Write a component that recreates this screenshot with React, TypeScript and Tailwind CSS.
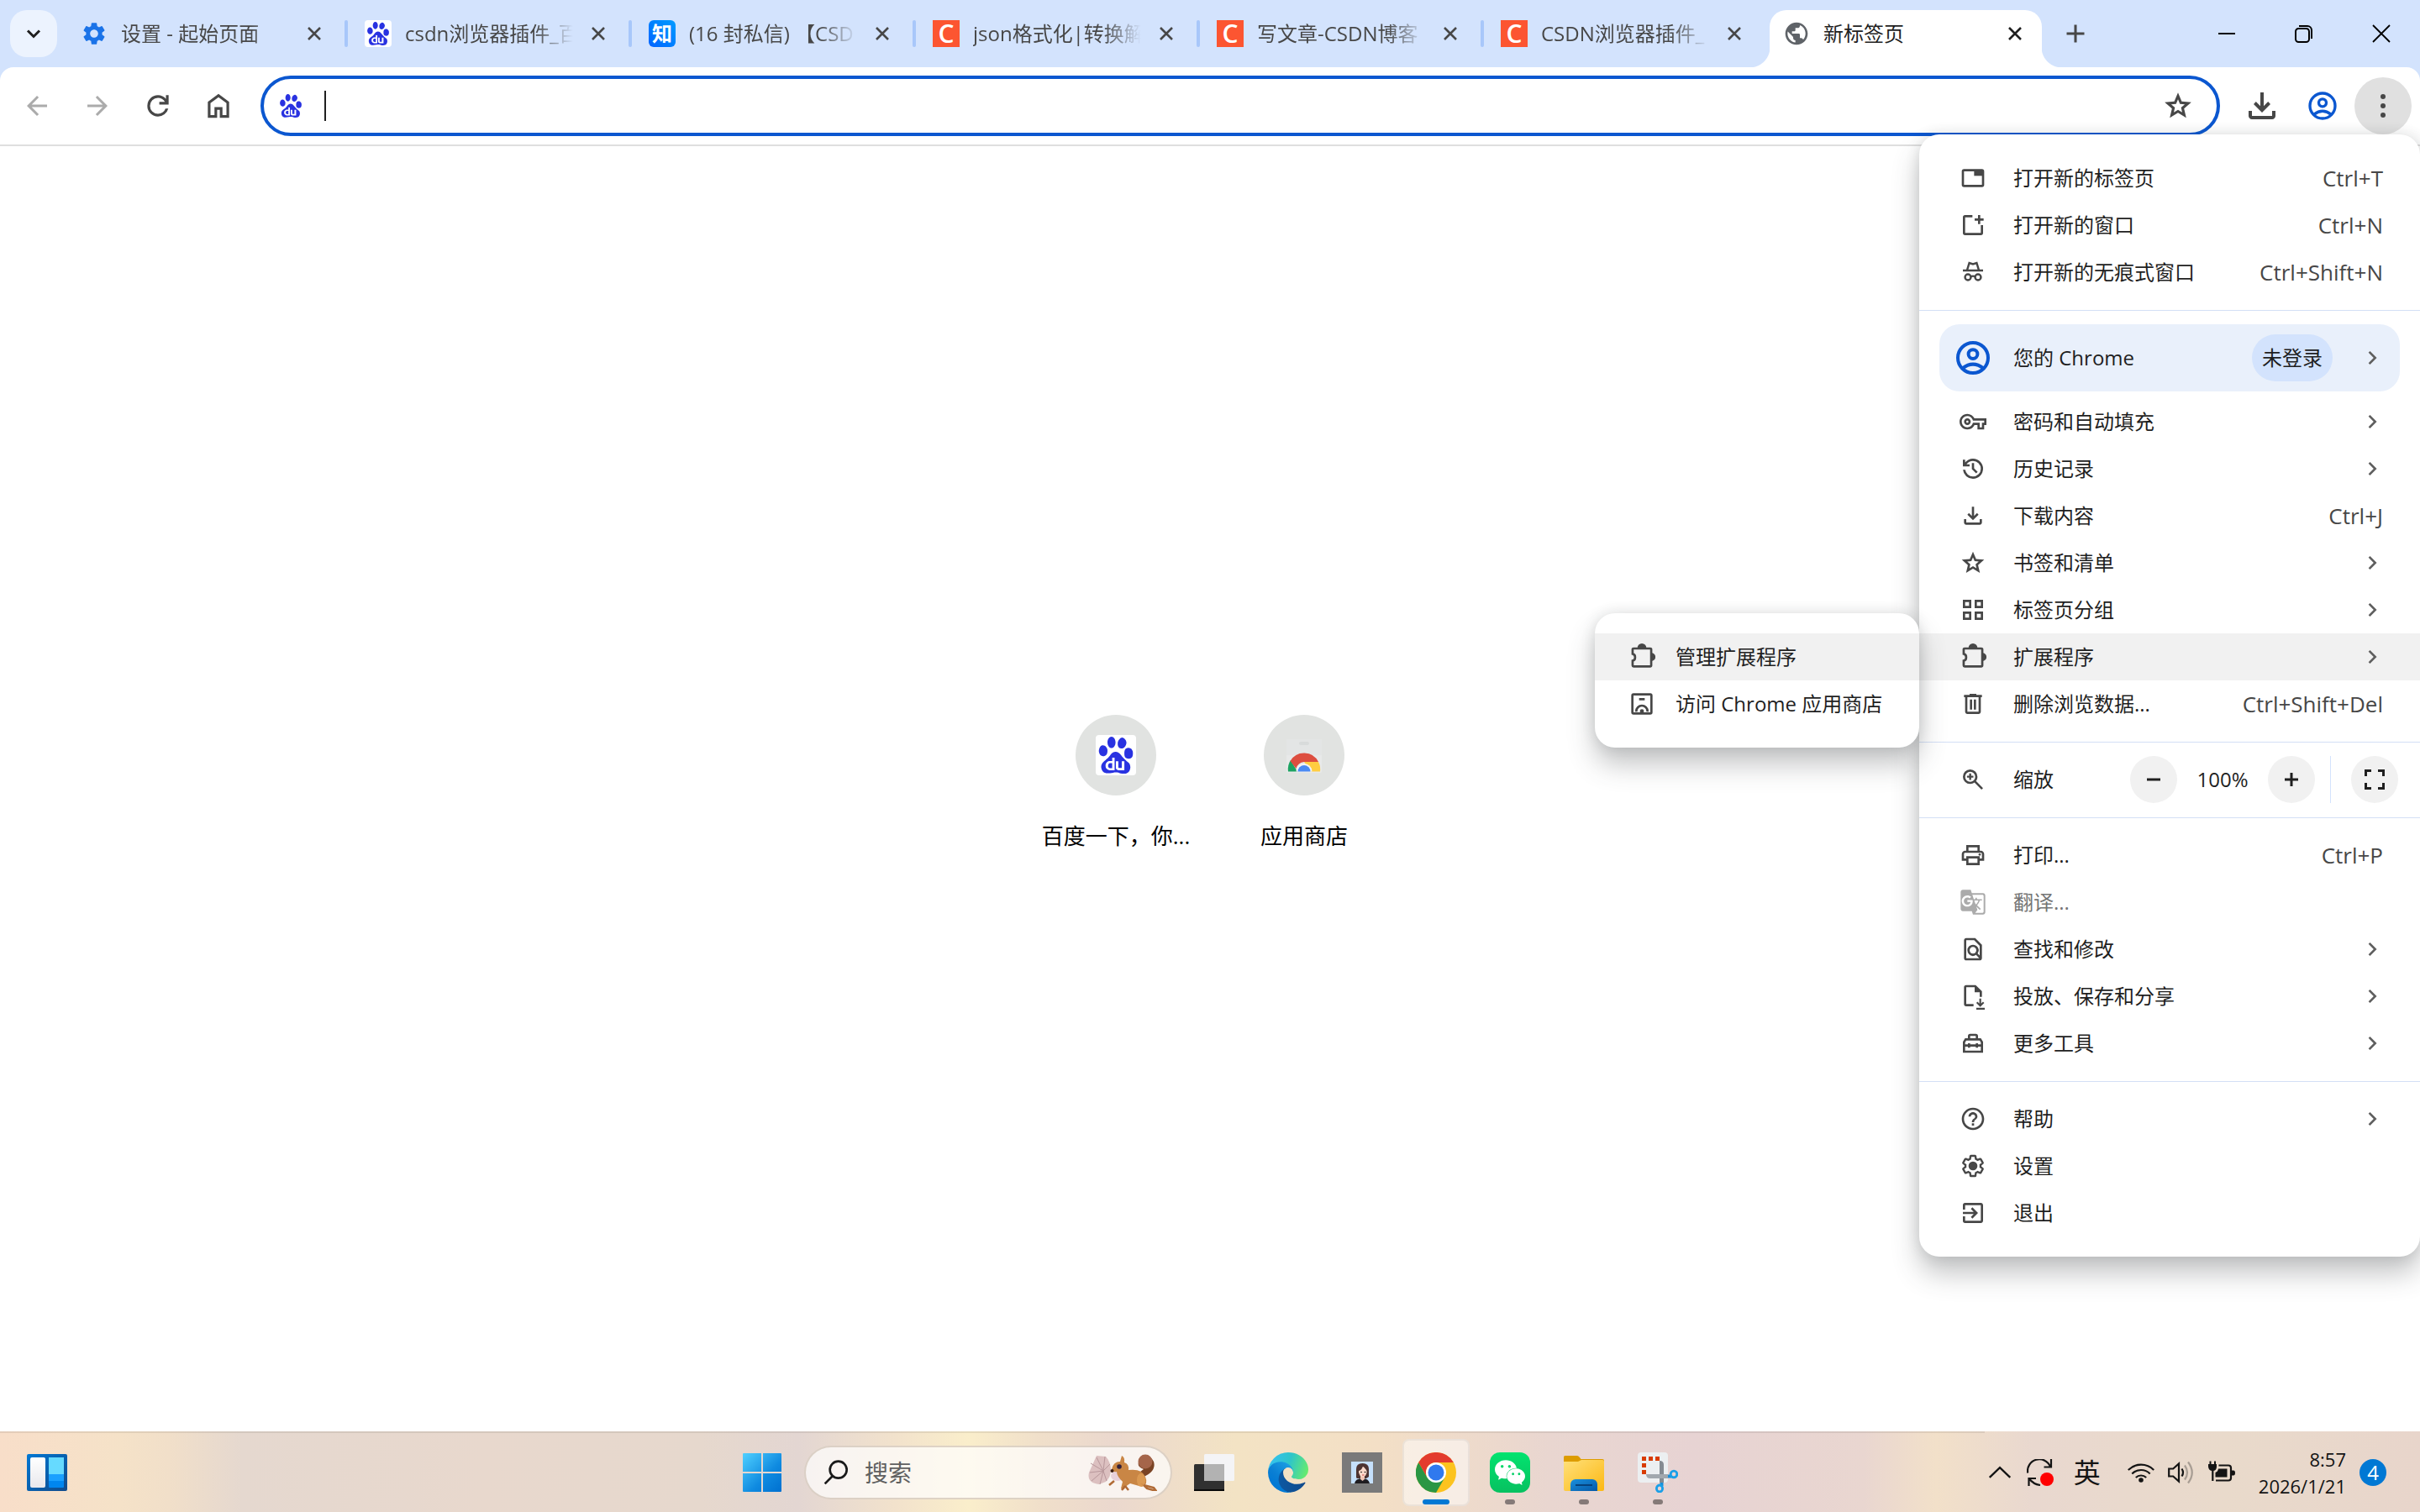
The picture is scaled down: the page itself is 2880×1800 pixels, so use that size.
import type { ReactNode } from "react";
import { MdExitToApp, MdGTranslate, MdHelpOutline, MdOutlineFindInPage, MdOutlinePrint, MdOutlineVpnKey, MdPublic, MdSettings } from "react-icons/md";
import { SiBaidu, SiWechat } from "react-icons/si";

const symbols = {
  back: "m313-440 224 224-57 56-320-320 320-320 57 56-224 224h487v80H313Z",
  forward: "M647-440H160v-80h487L423-744l57-56 320 320-320 320-57-56 224-224Z",
  refresh:
    "M480-160q-134 0-227-93t-93-227q0-134 93-227t227-93q69 0 132 28.5T720-690v-110h80v280H520v-80h168q-32-56-87.5-88T480-720q-100 0-170 70t-70 170q0 100 70 170t170 70q77 0 139-44t87-116h84q-28 106-114 173t-196 67Z",
  home: "M240-200h120v-240h240v240h120v-360L480-740 240-560v360Zm-80 80v-480l320-240 320 240v480H520v-240h-80v240H160Z",
  star: "m354-287 126-76 126 77-33-144 111-96-146-13-58-136-58 135-146 13 111 97-33 143ZM233-120l65-281L80-590l288-25 112-265 112 265 288 25-218 189 65 281-247-149-247 149Z",
  download:
    "M480-320 280-520l56-58 104 104v-326h80v326l104-104 56 58-200 200ZM240-160q-33 0-56.5-23.5T160-240v-120h80v120h480v-120h80v120q0 33-23.5 56.5T720-160H240Z",
  history:
    "M480-120q-138 0-240.5-91.5T122-440h82q14 104 92.5 172T480-200q117 0 198.5-81.5T760-480q0-117-81.5-198.5T480-760q-69 0-129 32t-101 88h110v80H120v-240h80v94q51-64 124.5-99T480-840q75 0 140.5 28.5t114 77q48.5 48.5 77 114T840-480q0 75-28.5 140.5t-77 114q-48.5 48.5-114 77T480-120Zm112-192L440-464v-216h80v184l128 128-56 56Z",
  trash:
    "M280-120q-33 0-56.5-23.5T200-200v-520h-40v-80h200v-40h240v40h200v80h-40v520q0 33-23.5 56.5T680-120H280Zm400-600H280v520h400v-520ZM370-280h80v-360h-80v360Zm140 0h80v-360h-80v360Z",
  zoom: "M784-120 532-372q-30 24-69 38t-83 14q-109 0-184.5-75.5T120-580q0-109 75.5-184.5T380-840q109 0 184.5 75.5T640-580q0 44-14 83t-38 69l252 252-56 56ZM380-400q75 0 127.5-52.5T560-580q0-75-52.5-127.5T380-760q-75 0-127.5 52.5T200-580q0 75 52.5 127.5T380-400Zm-35-65v-80h-80v-70h80v-80h70v80h80v70h-80v80Z",
  chevron: "M504-480 320-664l56-56 240 240-240 240-56-56 184-184Z",
};

function Symbol({ name, className = "size-8" }: { name: keyof typeof symbols; className?: string }) {
  return (
    <svg viewBox="0 -960 960 960" fill="currentColor" className={className} aria-hidden="true">
      <path d={symbols[name]} />
    </svg>
  );
}

function Line({ children, className = "size-8", width = 2 }: { children: ReactNode; className?: string; width?: number }) {
  return (
    <svg viewBox="0 0 24 24" fill="none" stroke="currentColor" strokeWidth={width} className={className} aria-hidden="true">
      {children}
    </svg>
  );
}

const TabIcon = () => (
  <Line>
    <rect x="3" y="5" width="18" height="14" rx="1" />
    <path d="M13 5h8v5h-8z" fill="currentColor" stroke="none" />
  </Line>
);

const NewWindowIcon = () => (
  <Line>
    <path d="M11.5 4H5a1 1 0 0 0-1 1v14a1 1 0 0 0 1 1h14a1 1 0 0 0 1-1v-7M17.500 3v8M13.500 7h8" />
  </Line>
);

const IncognitoIcon = () => (
  <Line width={1.8}>
    <path d="M3 10.500h18M6.800 10l1.900-6.200 3.300 1 3.300-1L17.200 10" />
    <circle cx="7.500" cy="16.500" r="2.600" />
    <circle cx="16.500" cy="16.500" r="2.600" />
    <path d="M10 16q2-1 4 0" />
  </Line>
);

const GridIcon = () => (
  <Line>
    <path d="M4 4h5.500v5.500H4zM14.500 4H20v5.500h-5.500zM4 14.500h5.500V20H4zM14.500 14.500H20V20h-5.500z" />
  </Line>
);

const PuzzleIcon = () => (
  <Line>
    <path d="M4.500 4.500h15a.8.8 0 0 1 .8.8v14.400a.8.8 0 0 1-.8.8h-15a.8.8 0 0 1-.8-.8v-4.200c3-.6 3-5.600 0-6.200v-4a.8.8 0 0 1 .8-.8z" />
    <path d="M9 4a3 3 0 0 1 6 0zM20.500 9.500a2.600 2.600 0 0 1 0 5.200z" fill="currentColor" />
  </Line>
);

const StoreIcon = () => (
  <Line>
    <rect x="3.500" y="3.500" width="17" height="17" rx="1" />
    <path d="M9.500 7.800h5M7 19v-.5a5 5 0 0 1 10 0v.5" />
    <circle cx="12" cy="18.500" r="1.800" fill="currentColor" stroke="none" />
  </Line>
);

const SaveIcon = () => (
  <Line>
    <path d="M12.500 20H6a1 1 0 0 1-1-1V4a1 1 0 0 1 1-1h8l5 5v4.500" />
    <path d="M13.500 2.500v6h6z" fill="currentColor" stroke="none" />
    <path d="M18.500 14v6.500M15.500 17.500l3 3 3-3M15 23.200h7.500" strokeWidth="1.600" />
  </Line>
);

const ToolboxIcon = () => (
  <Line>
    <path d="M8.500 8V5.500a1 1 0 0 1 1-1h5a1 1 0 0 1 1 1V8M5.500 8.500h13L20 11v8.500H4V11zM4 14h16M8.500 12v4M15.500 12v4" />
  </Line>
);

const GearIcon = () => (
  <Line>
    <path
      d="M19.430 12.980c.04-.32.070-.64.070-.98 0-.34-.03-.66-.07-.98l2.110-1.650c.19-.15.240-.42.120-.64l-2-3.460a.5.500 0 0 0-.61-.22l-2.490 1c-.52-.4-1.080-.73-1.690-.98l-.38-2.650A.488.488 0 0 0 14 2h-4c-.25 0-.46.180-.49.420l-.38 2.650c-.61.250-1.170.590-1.690.980l-2.490-1c-.25-.1-.48 0-.61.220l-2 3.460c-.13.220-.07.490.120.640l2.110 1.650c-.04.320-.07.650-.07.980 0 .33.030.660.070.980l-2.110 1.650c-.19.150-.24.420-.12.640l2 3.460c.13.220.360.310.610.220l2.490-1c.52.400 1.080.730 1.690.980l.38 2.650c.03.240.240.420.490.420h4c.25 0 .46-.18.490-.42l.38-2.650c.61-.25 1.170-.59 1.690-.98l2.490 1c.25.090.480 0 .61-.22l2-3.460c.12-.22.070-.49-.12-.64z"
      transform="translate(1.200 1.200) scale(.9)"
    />
    <circle cx="12" cy="12" r="4" fill="currentColor" stroke="none" />
  </Line>
);

function AccountIcon({ className = "size-10" }: { className?: string }) {
  return (
    <Line className={className}>
      <circle cx="12" cy="12" r="9" />
      <circle cx="12" cy="9.800" r="2.700" />
      <path d="M5.800 18.200q6.200-4.800 12.400 0" />
    </Line>
  );
}

function CloseIcon({ className = "size-6" }: { className?: string }) {
  return (
    <Line className={className} width={2.6}>
      <path d="m5 5 14 14M19 5 5 19" />
    </Line>
  );
}

function Baidu() {
  return (
    <span className="flex size-8 items-center justify-center rounded bg-white">
      <SiBaidu className="size-7 text-[#2932e1]" />
    </span>
  );
}

function Csdn() {
  return (
    <span className="flex size-8 items-center justify-center bg-[#fc5531] text-3xl leading-8 font-semibold text-white">C</span>
  );
}

function Zhihu() {
  return (
    <span className="flex size-8 items-center justify-center rounded-md bg-linear-to-tr from-[#0062ff] to-[#0a9bff] text-2xl leading-8 font-bold text-white">
      知
    </span>
  );
}

const tabs = [
  { title: "设置 - 起始页面", icon: <MdSettings className="size-8 text-[#1a73e8]" /> },
  { title: "csdn浏览器插件_百", icon: <Baidu /> },
  { title: "(16 封私信) 【CSD", icon: <Zhihu /> },
  { title: "json格式化|转换解", icon: <Csdn /> },
  { title: "写文章-CSDN博客", icon: <Csdn /> },
  { title: "CSDN浏览器插件_", icon: <Csdn /> },
];

function TabStrip() {
  return (
    <header className="flex h-20 pt-3">
      <button type="button" aria-label="搜索标签页" className="mr-2 ml-3 flex size-14 shrink-0 items-center justify-center rounded-[20px] bg-[#ecf3fe] text-[#1f1f1f]">
        <Line className="size-6" width={3}>
          <path d="m5 8.500 7 7 7-7" />
        </Line>
      </button>
      {tabs.map((tab, i) => (
        <div key={tab.title} className="flex h-14 w-[338px] items-center pl-5">
          {tab.icon}
          <span className="mr-2 ml-4 min-w-0 flex-1 whitespace-nowrap [mask-image:linear-gradient(to_right,black_75%,transparent_97%)]">
            {tab.title}
          </span>
          <button type="button" aria-label="关闭标签页" className="flex size-8 shrink-0 items-center justify-center">
            <CloseIcon />
          </button>
          <span className={i < tabs.length - 1 ? "ml-5 h-8 w-1 rounded bg-[#a8c7fa]" : "ml-5 w-1"} />
        </div>
      ))}
      <div className="relative ml-0.5 flex w-[324px] items-start rounded-t-[20px] bg-white px-4 text-[#1f1f1f]">
        <span className="absolute right-full bottom-0 size-6 bg-[radial-gradient(circle_at_0_0,transparent_24px,white_25px)]" />
        <span className="absolute bottom-0 left-full size-6 bg-[radial-gradient(circle_at_100%_0,transparent_24px,white_25px)]" />
        <div className="flex h-14 w-full items-center">
          <MdPublic className="size-8 text-[#5f6368]" />
          <span className="mx-4 flex-1">新标签页</span>
          <button type="button" aria-label="关闭标签页" className="flex size-8 items-center justify-center">
            <CloseIcon />
          </button>
        </div>
      </div>
      <button type="button" aria-label="打开新的标签页" className="ml-3 flex size-14 items-center justify-center">
        <Line className="size-7" width={2.6}>
          <path d="M12 3v18M3 12h18" />
        </Line>
      </button>
      <div className="ml-auto flex h-14 text-black">
        <button type="button" aria-label="最小化" className="flex w-23 items-center justify-center">
          <Line className="size-6" width={2}>
            <path d="M2 12h20" />
          </Line>
        </button>
        <button type="button" aria-label="还原" className="flex w-23 items-center justify-center">
          <Line className="size-6" width={2}>
            <rect x="2" y="6" width="16" height="16" rx="3.500" />
            <path d="M6 3h10a5 5 0 0 1 5 5v10" />
          </Line>
        </button>
        <button type="button" aria-label="关闭" className="flex w-23 items-center justify-center">
          <Line className="size-6" width={1.8}>
            <path d="m2 2 20 20M22 2 2 22" />
          </Line>
        </button>
      </div>
    </header>
  );
}

function Toolbar() {
  return (
    <nav className="flex h-[94px] items-center rounded-t-2xl border-b-2 border-[#dfdfdf] bg-white pr-2.5 pl-4 text-[#474747]">
      <div className="flex gap-4">
        <button type="button" aria-label="后退" disabled className="flex size-14 items-center justify-center text-[#ababab]">
          <Symbol name="back" className="size-9" />
        </button>
        <button type="button" aria-label="前进" disabled className="flex size-14 items-center justify-center text-[#ababab]">
          <Symbol name="forward" className="size-9" />
        </button>
        <button type="button" aria-label="重新加载" className="flex size-14 items-center justify-center">
          <Symbol name="refresh" className="size-[38px]" />
        </button>
        <button type="button" aria-label="主页" className="flex size-14 items-center justify-center">
          <Symbol name="home" className="size-[38px]" />
        </button>
      </div>
      <div className="mr-4 ml-[22px] flex h-18 flex-1 items-center rounded-full border-4 border-[#0b57d0] pl-4">
        <Baidu />
        <span className="ml-6 h-9 w-0.5 bg-[#1f1f1f]" />
        <input type="text" aria-label="地址和搜索栏" className="h-full flex-1 px-1 caret-transparent outline-none" />
        <button type="button" aria-label="为此标签页添加书签" className="mr-[18px] flex size-14 items-center justify-center">
          <Symbol name="star" className="size-[38px]" />
        </button>
      </div>
      <div className="flex gap-1">
        <button type="button" aria-label="下载" className="flex size-17 items-center justify-center">
          <Symbol name="download" className="size-12" />
        </button>
        <button type="button" aria-label="您" className="flex size-17 items-center justify-center text-[#0b57d0]">
          <AccountIcon />
        </button>
        <button type="button" aria-label="自定义及控制" className="flex size-17 items-center justify-center rounded-full bg-[#e0e0e0]">
          <svg viewBox="0 0 32 32" fill="currentColor" className="size-8">
            <circle cx="16" cy="5" r="3" />
            <circle cx="16" cy="16" r="3" />
            <circle cx="16" cy="27" r="3" />
          </svg>
        </button>
      </div>
    </nav>
  );
}

function MenuItem({
  icon,
  label,
  shortcut,
  arrow,
  active,
  disabled,
  children,
}: {
  icon: ReactNode;
  label: string;
  shortcut?: string;
  arrow?: boolean;
  active?: boolean;
  disabled?: boolean;
  children?: ReactNode;
}) {
  return (
    <li className="relative">
      <button
        type="button"
        disabled={disabled}
        className={`flex h-14 w-full items-center pl-12 text-left ${arrow ? "pr-10" : "pr-11"} ${active ? "bg-[#f1f1f1]" : ""}`}
      >
        <span className={`flex w-8 justify-center ${disabled ? "text-[#ababab]" : "text-[#474747]"}`}>{icon}</span>
        <span className={`ml-8 flex-1 ${disabled ? "text-[#757575]" : ""}`}>{label}</span>
        {shortcut && <span className="text-[26px] text-[#474747]">{shortcut}</span>}
        {arrow && <Symbol name="chevron" className="size-8 text-[#5e5e5e]" />}
      </button>
      {children}
    </li>
  );
}

function Divider() {
  return <li role="separator" className="my-4 h-0.5 border-b border-[#d3dff5]" />;
}

function SubMenu() {
  return (
    <ul className="absolute -top-6 right-full w-[386px] rounded-3xl bg-white py-6 shadow-[0_20px_32px_rgba(60,64,67,0.3),0_0_16px_rgba(60,64,67,0.15)]">
      <li>
        <button type="button" className="flex h-14 w-full items-center gap-6 bg-[#f1f1f1] pl-10">
          <span className="text-[#474747]"><PuzzleIcon /></span>
          管理扩展程序
        </button>
      </li>
      <li>
        <button type="button" className="flex h-14 w-full items-center gap-6 pl-10">
          <span className="text-[#474747]"><StoreIcon /></span>
          访问 Chrome 应用商店
        </button>
      </li>
    </ul>
  );
}

function ChromeMenu() {
  return (
    <ul className="absolute top-40 right-0 w-[596px] rounded-3xl bg-white py-6 text-[#1f1f1f] shadow-[0_20px_32px_rgba(60,64,67,0.3),0_0_16px_rgba(60,64,67,0.15)]">
      <MenuItem icon={<TabIcon />} label="打开新的标签页" shortcut="Ctrl+T" />
      <MenuItem icon={<NewWindowIcon />} label="打开新的窗口" shortcut="Ctrl+N" />
      <MenuItem icon={<IncognitoIcon />} label="打开新的无痕式窗口" shortcut="Ctrl+Shift+N" />
      <Divider />
      <li className="mx-6 mb-2">
        <button type="button" className="flex h-20 w-full items-center rounded-3xl bg-[#e9f0fb] px-4 text-left">
          <AccountIcon className="size-12 text-[#0b57d0]" />
          <span className="ml-6 flex-1">您的 Chrome</span>
          <span className="mr-8 flex h-14 items-center rounded-full bg-[#d3e3fd] px-3">未登录</span>
          <Symbol name="chevron" className="size-8 text-[#5e5e5e]" />
        </button>
      </li>
      <MenuItem icon={<MdOutlineVpnKey className="size-8" />} label="密码和自动填充" arrow />
      <MenuItem icon={<Symbol name="history" />} label="历史记录" arrow />
      <MenuItem icon={<Symbol name="download" />} label="下载内容" shortcut="Ctrl+J" />
      <MenuItem icon={<Symbol name="star" />} label="书签和清单" arrow />
      <MenuItem icon={<GridIcon />} label="标签页分组" arrow />
      <MenuItem icon={<PuzzleIcon />} label="扩展程序" arrow active>
        <SubMenu />
      </MenuItem>
      <MenuItem icon={<Symbol name="trash" />} label="删除浏览数据..." shortcut="Ctrl+Shift+Del" />
      <Divider />
      <li className="flex h-14 items-center pr-6.5 pl-12">
        <Symbol name="zoom" className="size-8 text-[#474747]" />
        <span className="ml-8 flex-1">缩放</span>
        <button type="button" aria-label="缩小" className="flex size-14 items-center justify-center rounded-full bg-[#f1f1f1]">
          <Line className="size-6" width={3}>
            <path d="M4 12h16" />
          </Line>
        </button>
        <span className="w-27 text-center">100%</span>
        <button type="button" aria-label="放大" className="flex size-14 items-center justify-center rounded-full bg-[#f1f1f1]">
          <Line className="size-6" width={3}>
            <path d="M4 12h16M12 4v16" />
          </Line>
        </button>
        <span className="ml-4.5 h-full border-l border-[#d3e3fd]" />
        <button type="button" aria-label="全屏" className="ml-6 flex size-14 items-center justify-center rounded-full bg-[#f1f1f1]">
          <Line className="size-6" width={3}>
            <path d="M1.500 8V1.500H8M16 1.500h6.500V8M22.500 16v6.500H16M8 22.500H1.500V16" />
          </Line>
        </button>
      </li>
      <Divider />
      <MenuItem icon={<MdOutlinePrint className="size-8" />} label="打印..." shortcut="Ctrl+P" />
      <MenuItem icon={<MdGTranslate className="size-8" />} label="翻译..." disabled />
      <MenuItem icon={<MdOutlineFindInPage className="size-8" />} label="查找和修改" arrow />
      <MenuItem icon={<SaveIcon />} label="投放、保存和分享" arrow />
      <MenuItem icon={<ToolboxIcon />} label="更多工具" arrow />
      <Divider />
      <MenuItem icon={<MdHelpOutline className="size-8" />} label="帮助" arrow />
      <MenuItem icon={<GearIcon />} label="设置" />
      <MenuItem icon={<MdExitToApp className="size-8" />} label="退出" />
    </ul>
  );
}

function WebStoreLogo() {
  return (
    <svg viewBox="0 0 48 48" className="size-12">
      <path d="M3 5h42v38a2 2 0 0 1-2 2H5a2 2 0 0 1-2-2z" fill="#e8e9e9" />
      <path d="M3 5h42v19H3z" fill="#e3e5e5" />
      <rect x="18" y="8" width="12" height="4" rx="2" fill="#d8dbdb" />
      <path d="M5 43.500A19 19 0 0 1 8 30l8 13.500z" fill="#1da362" />
      <path d="M7.500 31a19 19 0 0 1 33.500 1H24a11 11 0 0 0-9.500 8z" fill="#dd4e40" />
      <path d="M24 32h17a19 19 0 0 1 2 11.500H32z" fill="#ffcd41" />
      <path d="M14.500 43.500a9.500 9.500 0 0 1 19 0z" fill="#f5f5f5" />
      <path d="M16.500 43.500a7.500 7.500 0 0 1 15 0z" fill="#4a8af4" />
    </svg>
  );
}

function Shortcut({ label, children }: { label: string; children: ReactNode }) {
  return (
    <a href="#" className="flex size-56 flex-col items-center pt-6 text-[26px] leading-8 text-black">
      <span className="flex size-24 items-center justify-center rounded-full bg-[#e1e3e1]">{children}</span>
      <span className="mt-8">{label}</span>
    </a>
  );
}

function TaskItem({ label, running, active, children }: { label: string; running?: boolean; active?: boolean; children: ReactNode }) {
  return (
    <button type="button" aria-label={label} className="flex h-full w-22 items-center justify-center">
      <span className={`relative flex size-20 items-center justify-center rounded-lg ${active ? "border-2 border-black/5 bg-white/50" : ""}`}>
        {children}
        {active && <span className="absolute bottom-0 h-1.5 w-8 rounded-full bg-[#0078d4]" />}
        {running && <span className="absolute bottom-0.5 h-1.5 w-3 rounded-full bg-[#857a78]" />}
      </span>
    </button>
  );
}

const Widgets = () => (
  <svg viewBox="0 0 48 44" className="size-12">
    <defs>
      <linearGradient id="wg" x2="1" y2="1">
        <stop stopColor="#0078d4" />
        <stop offset="1" stopColor="#114a8b" />
      </linearGradient>
      <linearGradient id="wh" x2="0" y2="1">
        <stop stopColor="#fff" />
        <stop offset="1" stopColor="#e8e8ec" />
      </linearGradient>
    </defs>
    <rect width="48" height="44" rx="2" fill="url(#wg)" />
    <rect x="4" y="4" width="18" height="36" rx="2" fill="url(#wh)" />
    <rect x="26" y="4" width="18" height="36" rx="1" fill="#0086f0" />
    <path d="M26 4h18v28H26z" fill="#1aa0ff" />
    <path d="M26 4h18v20H26z" fill="#66daff" />
  </svg>
);

const WindowsLogo = () => (
  <svg viewBox="0 0 46 46" className="size-[46px]">
    <defs>
      <linearGradient id="win" x2="46" y2="46" gradientUnits="userSpaceOnUse">
        <stop stopColor="#4fd0ff" />
        <stop offset=".6" stopColor="#0f8ae0" />
        <stop offset="1" stopColor="#0070d0" />
      </linearGradient>
    </defs>
    <path d="M1 0h21v22H0V1a1 1 0 0 1 1-1zM24 0h21a1 1 0 0 1 1 1v21H24zM0 24h22v22H1a1 1 0 0 1-1-1zM24 24h22v21a1 1 0 0 1-1 1H24z" fill="url(#win)" />
  </svg>
);

const Squirrel = () => (
  <svg viewBox="0 0 82 44" className="h-11 w-[82px]">
    <path d="M10 2l11 1c8 9 8 23 0 30l-8 3C3 35-1 30 1 22z" fill="#dcc0c0" />
    <path d="M18 20 10 4M18 20 3 11M18 20 2 22M18 20 4 32M18 20 14 36M18 20 20 3M18 20 22 32M18 20 26 12" stroke="#b8979b" />
    <ellipse cx="35" cy="26" rx="8" ry="6" fill="#e8d0da" />
    <path d="M61 29q21-7 17-20-7-12-15-4-8 9 3 13-6 4-8 9z" fill="#7a4324" />
    <circle cx="68" cy="9" r="8.500" fill="#a5654a" />
    <path d="M28 18q2-9 10-9l2-7q4 2 3 8 6 2 5 9 16-2 20 8 4 9-4 12l-14-4q-7 4-7 7l-4-1 2-8q-7-7-7-12-5 1-6-3z" fill="#c98645" />
    <path d="M66 37l12 3 3 4-11-3zM31 32l-6 5M44 38l-4 5M44 38l4 5" stroke="#b06a35" strokeWidth="2.500" fill="none" />
    <circle cx="37" cy="15" r="2.800" fill="#33203a" />
    <circle cx="28.500" cy="20" r="2" fill="#3b1d12" />
    <ellipse cx="63" cy="31" rx="5" ry="8" fill="#e8a75b" opacity=".6" />
  </svg>
);

const TaskView = () => (
  <svg viewBox="0 0 48 48" className="size-12">
    <rect y="14" width="36" height="32" rx="1.500" fill="#303030" />
    <path d="M0 44h36v2H0z" fill="#080808" />
    <rect x="12" y="2" width="36" height="32" rx="1.500" fill="#f4f4f6" />
    <path d="M12 14h24v20H12z" fill="#b2b2b2" />
  </svg>
);

const Edge = () => (
  <svg viewBox="0 0 256 256" className="size-12">
    <defs>
      <linearGradient id="ea" x1="63" y1="177" x2="241" y2="177" gradientUnits="userSpaceOnUse">
        <stop stopColor="#0c59a4" />
        <stop offset="1" stopColor="#114a8b" />
      </linearGradient>
      <linearGradient id="eb" x1="157" y1="100" x2="46" y2="221" gradientUnits="userSpaceOnUse">
        <stop stopColor="#1b9de2" />
        <stop offset=".6" stopColor="#0a7fd4" />
        <stop offset="1" stopColor="#0078d4" />
      </linearGradient>
      <linearGradient id="ec" x1="10" y1="60" x2="250" y2="140" gradientUnits="userSpaceOnUse">
        <stop stopColor="#35c1f1" />
        <stop offset=".5" stopColor="#2fc5c9" />
        <stop offset="1" stopColor="#66eb6e" />
      </linearGradient>
    </defs>
    <g transform="translate(-4.600 -4.900)">
      <path d="M235.680 195.460a93.730 93.730 0 0 1-10.540 4.710 101.870 101.870 0 0 1-35.900 6.460c-47.320 0-88.540-32.550-88.540-74.320A31.480 31.480 0 0 1 117.130 105c-42.800 1.800-53.800 46.400-53.800 72.530 0 73.880 68.090 81.370 82.760 81.370 7.910 0 19.840-2.300 27-4.560l1.310-.44a128.340 128.340 0 0 0 66.600-52.800 4 4 0 0 0-5.320-5.640z" fill="url(#ea)" />
      <path d="M110.340 246.340A79.200 79.200 0 0 1 87.600 225a80.720 80.720 0 0 1 29.530-120c3.120-1.470 8.450-4.130 15.540-4a32.350 32.350 0 0 1 25.690 13 31.880 31.880 0 0 1 6.360 18.660c0-.21 24.460-79.600-80-79.600-43.900 0-80 41.660-80 78.210a130.150 130.150 0 0 0 12.110 56 128 128 0 0 0 156.380 67.110 75.550 75.550 0 0 1-62.780-8z" fill="url(#eb)" />
      <path d="M156.940 153.780c-.81 1.050-3.300 2.500-3.300 5.660 0 2.610 1.700 5.120 4.720 7.230 14.380 10 41.490 8.680 41.560 8.680a59.560 59.560 0 0 0 30.270-8.350 61.380 61.380 0 0 0 30.430-52.880c.26-22.410-8-37.310-11.340-43.910-21.190-41.450-66.930-65.290-116.670-65.290a128 128 0 0 0-128 126.200c.48-36.540 36.800-66.050 80-66.050 3.500 0 23.460.340 42 10.070 16.340 8.580 24.900 18.940 30.850 29.210 6.180 10.670 7.280 24.150 7.280 29.520s-2.740 13.330-7.800 19.910z" fill="url(#ec)" />
    </g>
  </svg>
);

const Avatar = () => (
  <svg viewBox="0 0 48 48" className="size-12">
    <path d="M0 0h48v48H0z" fill="#7a7a7a" />
    <path d="M11 11h26v26H11z" fill="#c5e0fb" />
    <path d="M17 30V20q0-7 7.500-7t7.500 7v9l-3 2H18z" fill="#4d3432" />
    <path d="M15 37q1-6 9-6t9 6z" fill="#1f1c20" />
    <path d="M22 27h5v5l-2.500 2-2.500-2z" fill="#f0c5b4" />
    <ellipse cx="24.800" cy="23" rx="4.800" ry="6" fill="#f9d9ca" />
    <path d="M20 22q4-1 5-6 3 4 5 6l1-5-6-3-6 3z" fill="#4d3432" />
    <circle cx="23" cy="23.500" r=".8" />
    <circle cx="27.500" cy="23.500" r=".8" />
    <path d="M24 27h2.500" stroke="#d34b4b" />
  </svg>
);

const Chrome = () => (
  <svg viewBox="0 0 48 48" className="size-12">
    <circle cx="24" cy="24" r="24" fill="#fcc31e" />
    <path d="M24 24 13.600 30 3.200 12A24 24 0 0 0 24 48l10.400-18z" fill="#2a9644" />
    <path d="M3.200 12a24 24 0 0 1 41.600 0H24A12 12 0 0 0 13.600 30z" fill="#e33b2e" />
    <circle cx="24" cy="24" r="12" fill="#fff" />
    <circle cx="24" cy="24" r="9.500" fill="#3079ee" />
  </svg>
);

const Folder = () => (
  <svg viewBox="0 0 48 48" className="size-12">
    <defs>
      <linearGradient id="fo" x2="1" y2="1">
        <stop stopColor="#ffe07a" />
        <stop offset="1" stopColor="#fcb813" />
      </linearGradient>
      <linearGradient id="fb" x2="1" y2="1">
        <stop stopColor="#1a90dd" />
        <stop offset="1" stopColor="#0559a8" />
      </linearGradient>
    </defs>
    <path d="M0 5.500A1.500 1.500 0 0 1 1.500 4H16q1.500 0 2.500 1.500L20.500 8H46a2 2 0 0 1 2 2v10H0z" fill="#dd9c00" />
    <path d="M0 11h17l4-2h25a2 2 0 0 1 2 2v33a2 2 0 0 1-2 2H2a2 2 0 0 1-2-2z" fill="url(#fo)" />
    <path d="M8 46v-8a6 6 0 0 1 6-6h20a6 6 0 0 1 6 6v8z" fill="url(#fb)" />
    <path d="M14 39h20" stroke="#06427c" strokeWidth="2" />
  </svg>
);

const Snip = () => (
  <svg viewBox="0 0 48 48" className="size-12">
    <rect width="36" height="36" rx="4" fill="#eceff1" />
    <path d="M5 5h5v5H5zM13 5h5v5h-5zM21 5h5v5h-5zM5 13h5v5H5zM5 21h5v5H5z" fill="#d83b01" />
    <path d="M26 10q5 0 5 5v21h-5z" fill="#858b92" />
    <path d="M10 26h26v5H15q-5 0-5-5z" fill="#a2a8ae" />
    <path d="M28.500 36v4M36 28.500h4" stroke="#1a8fd8" strokeWidth="4" />
    <ellipse cx="26" cy="43" rx="3.600" ry="4" fill="none" stroke="#1a9fe8" strokeWidth="2.800" />
    <ellipse cx="43" cy="26" rx="3.800" ry="3.800" fill="none" stroke="#1a9fe8" strokeWidth="2.800" />
  </svg>
);

function Tray() {
  return (
    <div className="flex items-center justify-end pr-10 text-[#141414]">
      <button type="button" aria-label="显示隐藏的图标">
        <Line className="size-7" width={2}>
          <path d="m1.500 17 10.500-10L22.500 17" />
        </Line>
      </button>
      <svg viewBox="0 0 32 32" fill="none" stroke="currentColor" strokeWidth="2.200" className="ml-4.5 size-8">
        <path d="M1.200 16.500A14 14 0 0 1 28 9M20.500 9.500h8.500V0M16 31Q8 30 3 23.500M11 23H2.500v9" />
        <circle cx="24" cy="24" r="8" fill="#f00" stroke="none" />
      </svg>
      <span className="ml-6 text-[32px] leading-10">英</span>
      <svg viewBox="0 0 32 32" fill="none" stroke="currentColor" strokeWidth="2.200" className="ml-8 size-8">
        <path d="M.8 13a21.500 21.500 0 0 1 30.400 0M5.300 17.500a15 15 0 0 1 21.400 0M9.800 22a9 9 0 0 1 12.400 0" />
        <circle cx="16" cy="25" r="2.800" fill="currentColor" stroke="none" />
      </svg>
      <svg viewBox="0 0 32 32" fill="none" stroke="currentColor" strokeWidth="2.200" className="ml-4 size-8">
        <path d="M1.200 11.500h5L13 5.500v21l-6.800-6h-5zM16.500 11.500q3 4.500 0 9" />
        <path d="M20 7.500q6 8.500 0 17M24 3.500q9.500 12.500 0 25" opacity=".3" />
      </svg>
      <svg viewBox="0 0 32 32" fill="none" stroke="currentColor" strokeWidth="2.200" className="ml-4 size-8">
        <path d="M12.500 7.500H24a3 3 0 0 1 3 3v12a3 3 0 0 1-3 3H9M5.300 13v13" />
        <path d="M0 6h1.500V2.500h2V6h3.500V2.500h2V6h1v3q0 5-4.800 5T0 9zM12 11.500h10.500v10h-14V16q3-1 3.500-4.500zM28 13.500h2q2 0 2 3t-2 3h-2z" fill="currentColor" stroke="none" />
      </svg>
      <div className="ml-7 text-right text-[22px] leading-8">
        <div>8:57</div>
        <div>2026/1/21</div>
      </div>
      <span className="ml-4 flex size-8 items-center justify-center rounded-full bg-[#0078d4] text-2xl text-white">4</span>
    </div>
  );
}

function Taskbar() {
  return (
    <footer className="h-24 bg-[linear-gradient(90deg,#f8dec9_0%,#f5e2c8_5%,#f1dfc9_7%,#e5d8cf_10%,#e8d8cd_20%,#e6d8cd_29%,#e3d6d2_33%,#f2e2cc_37%,#faeecb_40%,#f0dfca_43%,#ebd8ce_46%,#f3e3c4_51%,#f3dfc6_57%,#e9d6d0_64%,#e7d3d3_70%,#e9d6d0_77%,#f2e0c9_80%,#e9d8cf_84%,#e9dacb_92%,#e8d5cb_100%)]">
      <div className="h-0.5 w-[82%] bg-black/8" />
      <div className="grid h-[94px] grid-cols-[1fr_auto_1fr]">
        <button type="button" aria-label="小组件" className="ml-8 w-12">
          <Widgets />
        </button>
        <div className="flex items-center">
          <TaskItem label="开始">
            <WindowsLogo />
          </TaskItem>
          <div className="mx-1.5 flex h-16 w-[438px] items-center rounded-full border-2 border-[#b9a590]/45 bg-white/70 pr-4 pl-5">
            <Line className="size-8 text-[#1a1a1a]" width={2}>
              <circle cx="14" cy="9.500" r="7.500" />
              <path d="m9 15-7 7" />
            </Line>
            <input
              type="search"
              aria-label="搜索"
              placeholder="搜索"
              className="ml-[18px] min-w-0 flex-1 text-[28px] outline-none placeholder:text-[#606060]"
            />
            <Squirrel />
          </div>
          <TaskItem label="任务视图">
            <TaskView />
          </TaskItem>
          <TaskItem label="Microsoft Edge">
            <Edge />
          </TaskItem>
          <TaskItem label="头像">
            <Avatar />
          </TaskItem>
          <TaskItem label="Google Chrome" active>
            <Chrome />
          </TaskItem>
          <TaskItem label="微信" running>
            <span className="flex size-12 items-center justify-center rounded-xl bg-linear-to-b from-[#02e36f] to-[#07c160]">
              <SiWechat className="size-9 text-white" />
            </span>
          </TaskItem>
          <TaskItem label="文件资源管理器" running>
            <Folder />
          </TaskItem>
          <TaskItem label="截图工具" running>
            <Snip />
          </TaskItem>
        </div>
        <Tray />
      </div>
    </footer>
  );
}

export default function App() {
  return (
    <div className="relative flex min-h-screen flex-col overflow-hidden bg-[#d3e3fd] font-['Open_Sans','Noto_Sans_CJK_SC',sans-serif] text-2xl leading-8 text-[#474747]">
      <TabStrip />
      <Toolbar />
      <main className="flex flex-1 items-center justify-center bg-white">
        <Shortcut label="百度一下，你...">
          <span className="flex size-12 items-center justify-center rounded bg-white">
            <SiBaidu className="size-11 text-[#2932e1]" />
          </span>
        </Shortcut>
        <Shortcut label="应用商店">
          <WebStoreLogo />
        </Shortcut>
      </main>
      <Taskbar />
      <ChromeMenu />
    </div>
  );
}
